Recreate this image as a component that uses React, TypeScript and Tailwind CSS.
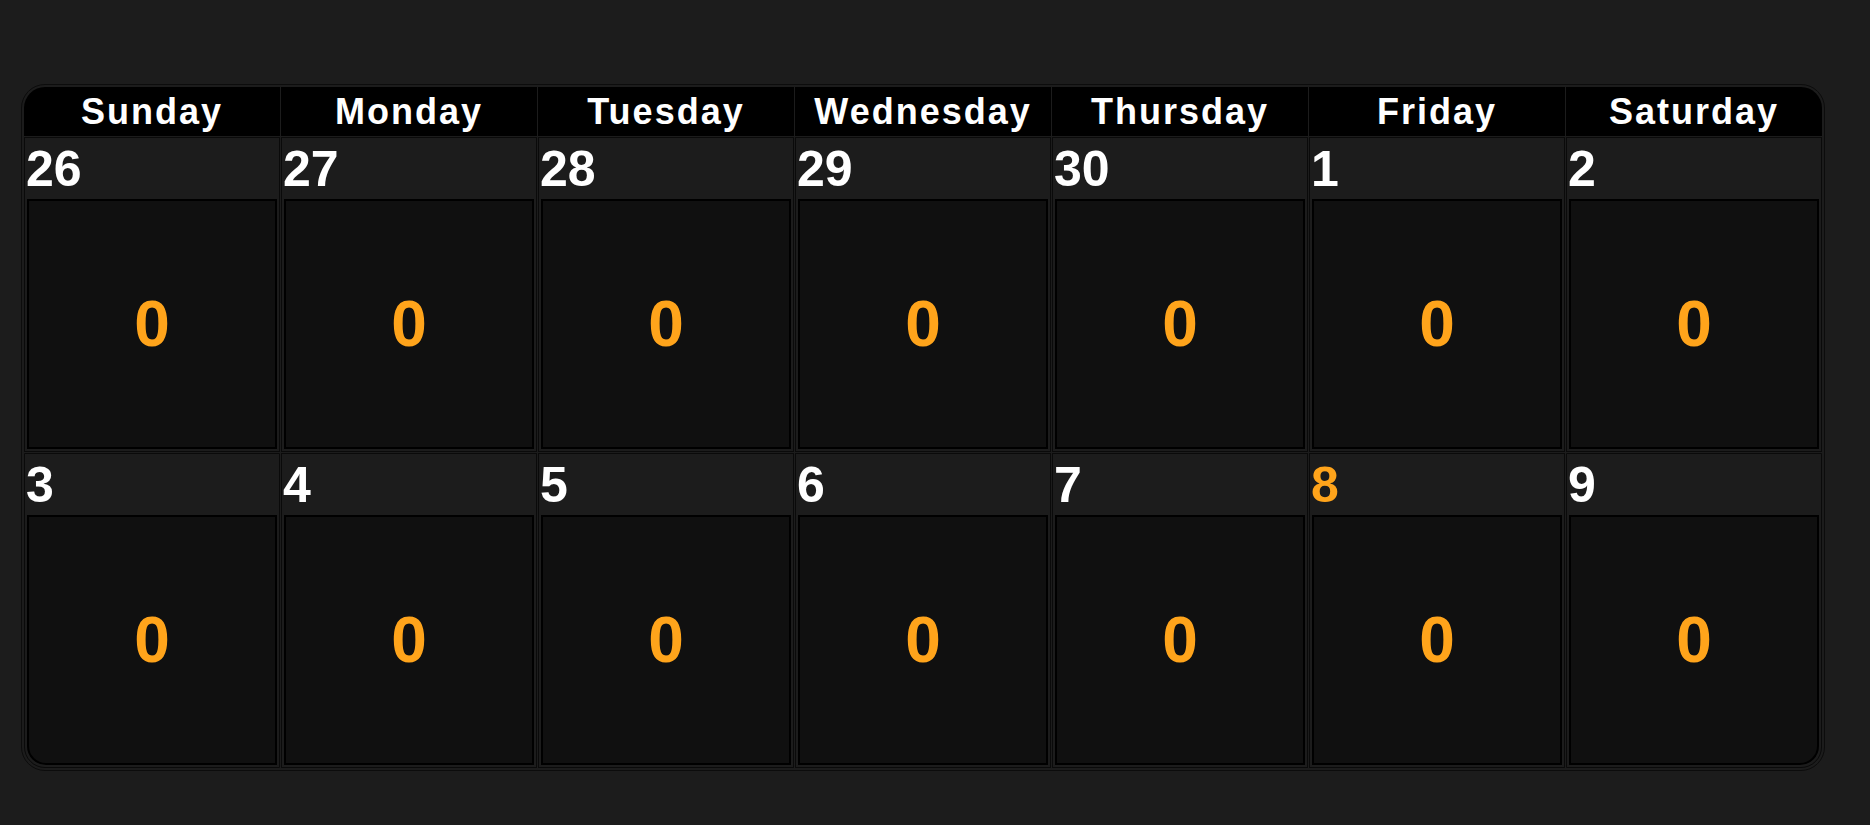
const days = ["Sunday", "Monday", "Tuesday", "Wednesday", "Thursday", "Friday", "Saturday"];

const weeks = [
  [26, 27, 28, 29, 30, 1, 2],
  [3, 4, 5, 6, 7, 8, 9],
];

const TODAY = 8;

const App = () => {
  return (
    <div
      className="w-full h-[825px] bg-[#1c1c1c] pt-[84px] pl-[21px]"
      style={{ fontFamily: '"Liberation Sans", Arial, sans-serif' }}
    >
      <div className="w-[1804px] rounded-[24px] border border-[#0c0c0c] bg-[#1c1c1c] p-[2px]">
        <div className="grid grid-cols-7 gap-[1px]">
          {/* --- Weekday header --- */}
          {days.map((day, i) => (
            <div
              key={day}
              className={`h-[49px] bg-black flex items-center justify-center text-white font-bold text-[36px] leading-none tracking-[2px] ${
                i === 0 ? "rounded-tl-[21px]" : ""
              } ${i === 6 ? "rounded-tr-[21px]" : ""}`}
            >
              {day}
            </div>
          ))}

          {/* --- Day cells --- */}
          {weeks.map((week, w) =>
            week.map((date, i) => {
              const lastRow = w === weeks.length - 1;
              const bl = lastRow && i === 0;
              const br = lastRow && i === 6;
              return (
                <div
                  key={`${w}-${i}`}
                  className={`h-[315px] flex flex-col border border-[#0a0a0a] bg-[#1c1c1c] px-[2px] pb-[2px] ${
                    bl ? "rounded-bl-[21px]" : ""
                  } ${br ? "rounded-br-[21px]" : ""}`}
                >
                  <div
                    className={`h-[61px] shrink-0 -mx-[1px] pt-[6px] font-bold text-[50px] leading-[50px] ${
                      date === TODAY && w === 1 ? "text-[#ffa41b]" : "text-white"
                    }`}
                  >
                    {date}
                  </div>
                  <div
                    className={`flex-1 flex items-center justify-center border-2 border-black bg-[#101010] ${
                      bl ? "rounded-bl-[19px]" : ""
                    } ${br ? "rounded-br-[19px]" : ""}`}
                  >
                    <span className="text-[#ffa41b] font-bold text-[64px] leading-none">0</span>
                  </div>
                </div>
              );
            })
          )}
        </div>
      </div>
    </div>
  );
};

export default App;
